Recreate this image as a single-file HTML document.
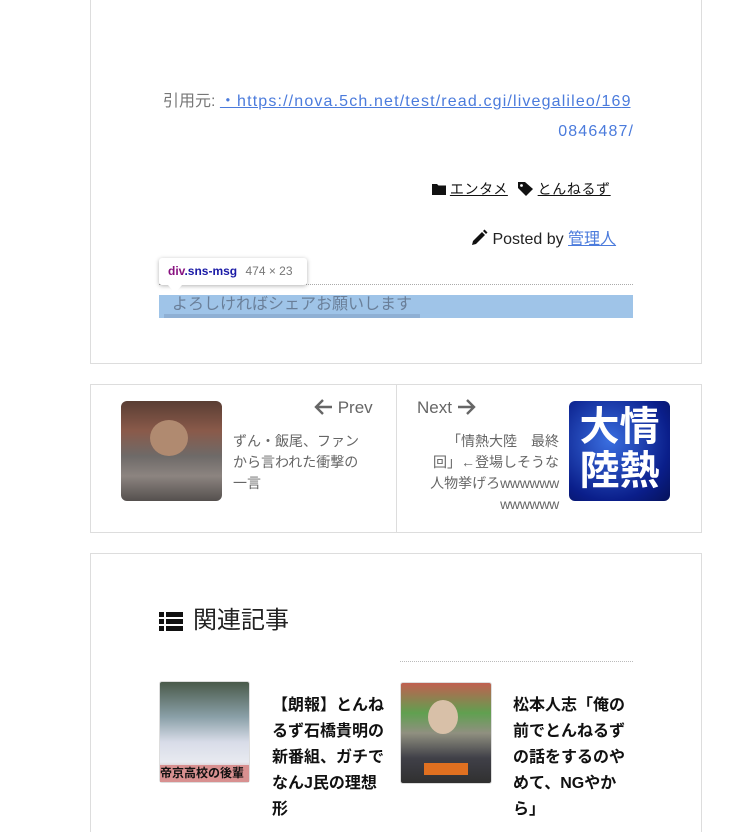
<!DOCTYPE html>
<html><head><meta charset="utf-8"><style>
*{margin:0;padding:0;box-sizing:border-box}
html,body{width:754px;height:832px;overflow:hidden}
body{background:#fff;position:relative;font-family:"Liberation Sans","Noto Sans CJK JP",sans-serif}
.abs{position:absolute}
.box{position:absolute;border:1px solid #ddd;background:#fff}
a{color:#4b7bdc}
.t{white-space:nowrap}
</style></head><body>
<div class="box" style="left:90px;top:-10px;width:612px;height:374px"></div>
<div class="abs t" style="left:163px;top:90px;font-size:16px;line-height:24px;color:#777">引用元: <a style="text-decoration:underline;letter-spacing:1.15px">・https://nova.5ch.net/test/read.cgi/livegalileo/16<span style="letter-spacing:0">9</span></a></div>
<div class="abs t" style="left:533px;top:120px;font-size:16px;line-height:24px;width:100px;text-align:right"><a style="letter-spacing:1.15px">0846487<span style="letter-spacing:0">/</span></a></div>
<div class="abs t" style="left:432px;top:179px;font-size:14px;line-height:20px;color:#111">
<svg width="14" height="12" viewBox="0 0 14 12" style="vertical-align:-1px"><path d="M0 1h5l1.5 1.5H14V12H0z" fill="#111"/></svg>
<span style="text-decoration:underline;letter-spacing:0.6px">エンタメ</span>
<svg width="16" height="14" viewBox="0 0 16 14" style="vertical-align:-2px;margin-left:6px"><path d="M0 0h7l8 7-7 7-8-8z" fill="#111"/><circle cx="3.5" cy="3.5" r="1.4" fill="#fff"/></svg>
<span style="text-decoration:underline;letter-spacing:0.6px">とんねるず</span></div>
<div class="abs t" style="left:470px;top:229px;font-size:16px;line-height:22px;color:#222">
<svg width="18" height="18" viewBox="0 0 18 18" style="vertical-align:-3px"><path d="M2 16l1-4 9-9 3 3-9 9z" fill="#111"/><path d="M13 2l1.5-1.5 3 3L16 5z" fill="#111"/></svg>
Posted by <a style="text-decoration:underline">管理人</a></div>
<div class="abs" style="left:159px;top:284px;width:474px;border-top:1px dotted #aaa"></div>
<div class="abs" style="left:159px;top:295px;width:474px;height:23px;background:#9fc4e8"></div>
<div class="abs" style="left:164px;top:314px;width:256px;height:4px;background:#8fb0d4"></div>
<div class="abs t" style="left:172px;top:294px;font-size:16px;line-height:22px;color:#6a7f99">よろしければシェアお願いします</div>
<div class="abs t" style="left:159px;top:258px;width:148px;height:27px;background:#fff;border-radius:3px;box-shadow:0 1px 4px rgba(0,0,0,.3);font-size:12px;line-height:27px;padding-left:9px"><b style="color:#881280">div</b><b style="color:#1a1aa6">.sns-msg</b> <span style="color:#777;margin-left:5px">474 × 23</span></div>
<div class="abs" style="left:168px;top:285px;width:0;height:0;border-left:7px solid transparent;border-right:7px solid transparent;border-top:8px solid #fff"></div>

<div class="box" style="left:90px;top:384px;width:612px;height:149px"></div>
<div class="abs" style="left:396px;top:385px;width:1px;height:147px;background:#ddd"></div>
<div class="abs" style="left:121px;top:401px;width:101px;height:100px;border-radius:6px;background:linear-gradient(180deg,#5a3e34 0%,#8a5a4a 30%,#6e6a68 55%,#8c8480 75%,#55504e 100%)"></div>
<div class="abs" style="left:150px;top:420px;width:38px;height:36px;border-radius:50%;background:#b08a70"></div>
<div class="abs t" style="left:313px;top:397px;font-size:17px;line-height:22px;color:#666">
<svg width="20" height="18" viewBox="0 0 20 18" style="vertical-align:-3px"><path d="M19 9H3M10 2L3 9l7 7" stroke="#666" stroke-width="2.4" fill="none"/></svg> Prev</div>
<div class="abs" style="left:233px;top:431px;width:130px;font-size:14px;line-height:21px;color:#666">ずん・飯尾、ファンから言われた衝撃の一言</div>
<div class="abs t" style="left:417px;top:397px;font-size:17px;line-height:22px;color:#666">Next <svg width="20" height="18" viewBox="0 0 20 18" style="vertical-align:-3px"><path d="M1 9h16M10 2l7 7-7 7" stroke="#666" stroke-width="2.4" fill="none"/></svg></div>
<div class="abs t" style="left:400px;top:431px;width:159px;font-size:14px;line-height:21px;color:#666;text-align:right">「情熱大陸　最終<br>回」←登場しそうな<br>人物挙げろ<span style="letter-spacing:-0.3px">wwwwww</span><br><span style="letter-spacing:-0.3px">wwwwww</span></div>
<div class="abs" style="left:569px;top:401px;width:101px;height:100px;border-radius:6px;background:radial-gradient(circle at 40% 40%,#3a6ee0,#0a1e8a 70%,#06125a);color:#fff;font-weight:bold;font-size:40px;line-height:44px;font-family:'Noto Sans CJK JP',sans-serif;overflow:hidden;text-align:center">大情<br>陸熱</div>

<div class="box" style="left:90px;top:553px;width:612px;height:300px"></div>
<svg class="abs" style="left:159px;top:612px" width="24" height="19" viewBox="0 0 24 19"><path d="M0 0h5v5H0zM7 0h17v5H7zM0 7h5v5H0zM7 7h17v5H7zM0 14h5v5H0zM7 14h17v5H7z" fill="#111"/></svg>
<div class="abs t" style="left:193px;top:605px;font-size:24px;line-height:32px;color:#222">関連記事</div>
<div class="abs" style="left:400px;top:661px;width:233px;border-top:1px dotted #bbb"></div>
<div class="abs" style="left:159px;top:681px;width:91px;height:102px;border:1px solid #ddd;border-radius:3px;background:linear-gradient(180deg,#4a5a4a 0%,#8aa0a8 35%,#d8dce8 60%,#e8eaf0 80%,#b07070 100%)"></div>
<div class="abs" style="left:160px;top:765px;width:89px;height:17px;background:#d89090;color:#111;font-size:12px;font-weight:bold;line-height:17px;overflow:hidden;white-space:nowrap">帝京高校の後輩</div>
<div class="abs" style="left:272px;top:693px;width:115px;font-size:16px;line-height:26px;font-weight:bold;color:#111">【朗報】とんねるず石橋貴明の新番組、ガチでなんJ民の理想形</div>
<div class="abs" style="left:400px;top:682px;width:92px;height:102px;border:1px solid #ddd;border-radius:3px;background:linear-gradient(180deg,#c06050 0%,#60a050 30%,#909080 50%,#404048 75%,#303030 100%)"></div>
<div class="abs" style="left:428px;top:700px;width:30px;height:34px;border-radius:50%;background:#d8c0a8"></div>
<div class="abs" style="left:424px;top:763px;width:44px;height:12px;background:#e07020"></div>
<div class="abs" style="left:513px;top:693px;width:115px;font-size:16px;line-height:26px;font-weight:bold;color:#111">松本人志「俺の前でとんねるずの話をするのやめて、NGやから」</div>
</body></html>
